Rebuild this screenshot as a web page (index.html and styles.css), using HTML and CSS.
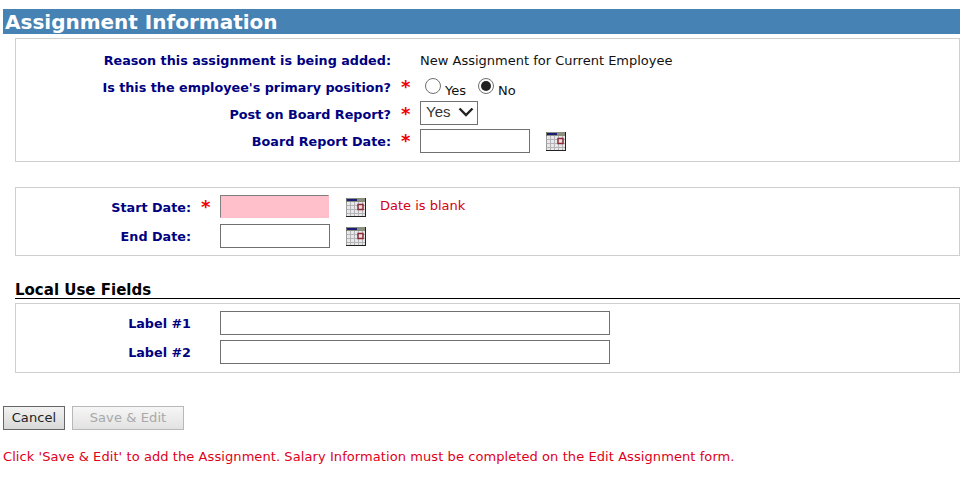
FILE: index.html
```html
<!DOCTYPE html>
<html lang="en">
<head>
<meta charset="utf-8">
<title>Assignment Information</title>
<link rel="stylesheet" href="styles.css">
</head>
<body>
<svg class="defs" width="0" height="0" aria-hidden="true">
  <defs>
    <symbol id="cal" viewBox="0 0 20 19">
      <rect x="0" y="0" width="20" height="19" fill="#e8e8e8"/>
      <rect x="0" y="0" width="20" height="4" fill="#8a8f80"/>
      <rect x="1" y="1" width="10" height="2" fill="#1c1c78"/>
      <path d="M1 7.5H19M1 11.5H19M1 15.5H19M4.500 4V18M8.500 4V18M12.500 4V18M16.500 4V18" stroke="#b4b4b8" stroke-width="1" fill="none"/>
      <rect x="12" y="6.500" width="5" height="5" fill="#e8e0e0" stroke="#8b2a35" stroke-width="1.500"/>
      <path d="M0 18.500H20M19.500 0V19" stroke="#222" stroke-width="1" fill="none"/>
      <path d="M0 0V18" stroke="#555" stroke-width="1" fill="none"/>
    </symbol>
  </defs>
</svg>
<main class="page">
  <h1 class="title">Assignment Information</h1>

  <section class="box box-a">
    <div class="row row-a1">
      <span class="label">Reason this assignment is being added:</span>
      <span class="star"></span>
      <span class="value">New Assignment for Current Employee</span>
    </div>
    <div class="row row-a2">
      <span class="label">Is this the employee's primary position?</span>
      <span class="star">*</span>
      <span class="radios">
        <span class="radio"></span><span class="radio-text">Yes</span>
        <span class="radio radio-on"></span><span class="radio-text">No</span>
      </span>
    </div>
    <div class="row row-a3">
      <span class="label">Post on Board Report?</span>
      <span class="star">*</span>
      <span class="select">Yes
        <svg class="chev" width="16" height="10" viewBox="0 0 16 10"><path d="M1.500 1.500L8 8L14.500 1.500" fill="none" stroke="#222" stroke-width="2.400"/></svg>
      </span>
    </div>
    <div class="row row-a4">
      <span class="label">Board Report Date:</span>
      <span class="star">*</span>
      <span class="field">
        <span class="input"></span>
        <svg class="cal" width="20" height="19"><use href="#cal"/></svg>
      </span>
    </div>
  </section>

  <section class="box box-b">
    <div class="row">
      <span class="label">Start Date:</span>
      <span class="star">*</span>
      <span class="field">
        <span class="input input-error"></span>
        <svg class="cal" width="20" height="19"><use href="#cal"/></svg>
        <span class="error">Date is blank</span>
      </span>
    </div>
    <div class="row">
      <span class="label">End Date:</span>
      <span class="star"></span>
      <span class="field">
        <span class="input"></span>
        <svg class="cal" width="20" height="19"><use href="#cal"/></svg>
      </span>
    </div>
  </section>

  <h2 class="subhead">Local Use Fields</h2>

  <section class="box box-c">
    <div class="row">
      <span class="label">Label #1</span>
      <span class="star"></span>
      <span class="input input-wide"></span>
    </div>
    <div class="row">
      <span class="label">Label #2</span>
      <span class="star"></span>
      <span class="input input-wide"></span>
    </div>
  </section>

  <div class="actions">
    <button class="btn" type="button">Cancel</button>
    <button class="btn btn-off" type="button" disabled>Save &amp; Edit</button>
  </div>

  <p class="note">Click 'Save &amp; Edit' to add the Assignment. Salary Information must be completed on the Edit Assignment form.</p>
</main>
</body>
</html>
```
FILE: styles.css
```css
* { box-sizing: border-box; }
html, body { margin: 0; padding: 0; background: #fff; }
body {
  font-family: "DejaVu Sans", Verdana, sans-serif;
  font-size: 13px;
  color: #111;
  overflow: hidden;
}
.defs { position: absolute; }
.page { padding: 9px 5px 0 3px; width: 965px; }
.title {
  margin: 0;
  height: 25px;
  background: #4682b4;
  color: #fff;
  font-size: 20px;
  line-height: 27px;
  font-weight: bold;
  padding-left: 2px;
}
.box {
  margin: 4px 0 0 12px;
  border: 1px solid #cfcfcf;
  display: flex;
  flex-direction: column;
}
.box-a { height: 124px; padding-top: 10px; }
.box-b { height: 69px; margin-top: 25px; padding-top: 7px; gap: 5px; }
.box-c { height: 70px; margin-top: 4px; padding-top: 7px; gap: 5px; }
.row {
  display: grid;
  align-items: center;
  grid-template-columns: 175px 29px 1fr;
  height: 24px;
}
.box-a .row { grid-template-columns: 375px 29px 1fr; }
.box-a .row-a1 { height: 22px; }
.box-a .row-a2 { height: 30px; padding-top: 2px; }
.box-a .row-a3 { height: 24px; padding-top: 2px; }
.box-a .row-a4 { height: 28px; padding-top: 4px; }
.label {
  text-align: right;
  font-weight: bold;
  color: #000080;
  font-size: 12.75px;
  white-space: nowrap;
}
.star {
  color: #f00000;
  font-weight: bold;
  font-size: 18px;
  line-height: 18px;
  padding-left: 10px;
}
.value { font-size: 13px; }
.radios { display: flex; align-items: center; padding-left: 5px; }
.radio {
  width: 16px;
  height: 16px;
  border-radius: 50%;
  border: 1px solid #707070;
  background: #fff;
  margin-top: -3px;
}
.radio-on { position: relative; margin-left: 10px; }
.radio-text + .radio-on { margin-left: 12px; }
.radio-on::after {
  content: "";
  position: absolute;
  left: 2px;
  top: 2px;
  width: 10px;
  height: 10px;
  border-radius: 50%;
  background: #222;
}
.radio-text { margin: 6px 0 0 4px; font-size: 13px; }
.select {
  width: 58px;
  height: 24px;
  margin-top: -2px;
  align-self: start;
  border: 1px solid #707070;
  font-size: 15px;
  line-height: 19px;
  padding-left: 5px;
  color: #333;
  position: relative;
  font-family: "Liberation Sans", Arial, sans-serif;
}
.chev { position: absolute; right: 3px; top: 5px; }
.field { display: flex; align-items: center; }
.input {
  display: block;
  width: 110px;
  height: 24px;
  border: 1px solid #707070;
  background: #fff;
}
.input-error {
  background: #ffc0cb;
  border-color: #7f7f7f #ffc0cb #ffc0cb #7f7f7f;
  height: 23px;
  margin-bottom: 1px;
  width: 109px;
  margin-right: 1px;
}
.input-wide { width: 390px; }
.cal { margin-left: 16px; }
.error {
  color: #d40015;
  font-size: 13px;
  margin: -4px 0 0 14px;
}
.subhead {
  margin: 24px 0 0 12px;
  border-bottom: 1px solid #000;
  font-size: 15px;
  line-height: 21px;
  height: 19px;
  font-weight: bold;
  color: #000;
}
.actions { display: flex; gap: 7px; margin-top: 33px; }
.btn {
  height: 24px;
  width: 62px;
  padding: 0 0 1px;
  border: 1px solid #666;
  background: linear-gradient(#f2f2f2, #d8d8d8);
  font: 13px "DejaVu Sans", Verdana, sans-serif;
  letter-spacing: 0.1px;
  color: #222;
}
.btn-off {
  width: 112px;
  border-color: #b8b8b8;
  background: linear-gradient(#f6f6f6, #e2e2e2);
  color: #a8a8a8;
}
.note {
  margin: 19px 0 0;
  color: #e0001a;
  font-size: 13px;
  letter-spacing: 0.08px;
  line-height: 15px;
  white-space: nowrap;
}
```
